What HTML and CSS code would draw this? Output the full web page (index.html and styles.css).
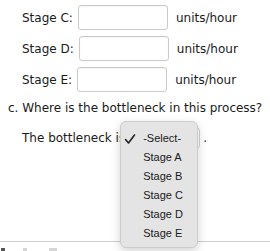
FILE: index.html
```html
<!DOCTYPE html>
<html lang="en-US">
	<head>
		<title>Bottleneck question</title>
		<link rel="stylesheet" href="styles.css">
	</head>
	<body>
		<div class="page">
			<div class="rate-list">
				<div class="rate-row">
					<label>Stage C:</label>
					<span class="rate-input"></span>
					<span>units/hour</span>
				</div>
				<div class="rate-row">
					<label>Stage D:</label>
					<span class="rate-input"></span>
					<span>units/hour</span>
				</div>
				<div class="rate-row">
					<label>Stage E:</label>
					<span class="rate-input"></span>
					<span>units/hour</span>
				</div>
			</div>
			<p class="question">c. Where is the bottleneck in this process?</p>
			<div class="answer">
				<span>The bottleneck is</span>
				<span class="select-wrap">
					<span class="select-box"></span>
					<div class="menu">
						<div class="menu-item checked">
							<svg class="check" width="12" height="12" viewBox="0 0 12 12">
								<polyline points="1.5,6.5 4.5,10 10.5,2" fill="none" stroke="#222" stroke-width="1.6" stroke-linecap="round" stroke-linejoin="round"/>
							</svg>
							-Select-
						</div>
						<div class="menu-item">Stage A</div>
						<div class="menu-item">Stage B</div>
						<div class="menu-item">Stage C</div>
						<div class="menu-item">Stage D</div>
						<div class="menu-item">Stage E</div>
					</div>
				</span>
				<span>.</span>
			</div>
			<div class="divider"></div>
			<div class="toolbar">
				<span class="tool dark"></span>
				<span class="tool"></span>
				<span class="tool wide"></span>
			</div>
		</div>
	</body>
</html>
```
FILE: styles.css
```css
* {
	box-sizing: border-box;
}
body {
	margin: 0;
	background: white;
	color: #1a1a1a;
	font-family: "DejaVu Sans", Verdana, sans-serif;
	font-size: 12px;
	overflow: hidden;
}

.page {
	width: 270px;
	height: 251px;
	padding-top: 5px;
}

.rate-list {
	display: flex;
	flex-direction: column;
	gap: 6px;
	padding-left: 22px;
}
.rate-row {
	display: flex;
	align-items: center;
	height: 25px;
}
.rate-row label {
	margin-right: 5px;
}
.rate-input {
	width: 90px;
	height: 25px;
	border: 1px solid #cacaca;
	border-radius: 3px;
	background: white;
	margin-right: 8px;
	box-shadow: inset 0 1px 1px rgba(0, 0, 0, 0.04);
}

.question {
	margin: 8px 0 0 8px;
	line-height: 16px;
}

.answer {
	display: flex;
	align-items: center;
	height: 24px;
	margin-top: 10px;
	padding-left: 22px;
}
.select-wrap {
	position: relative;
	margin: 0 3px 0 3px;
}
.select-box {
	display: block;
	width: 72px;
	height: 24px;
	border: 1px solid #d2d2d2;
	border-radius: 5px;
	background: white;
}
.menu {
	position: absolute;
	left: -8px;
	top: -5px;
	width: 78px;
	padding: 7px 0 4px;
	background: #e4e4e4;
	border: 1px solid #cdcdcd;
	border-radius: 6px;
	box-shadow: 0 3px 10px rgba(0, 0, 0, 0.18);
	font-family: "Liberation Sans", Arial, sans-serif;
	font-size: 11px;
	color: #1a1a1a;
	z-index: 2;
}
.menu-item {
	position: relative;
	height: 19px;
	line-height: 19px;
	padding-left: 22px;
}
.check {
	position: absolute;
	left: 3px;
	top: 4px;
}

.divider {
	height: 1px;
	background: #cfcfcf;
	margin-top: 91px;
}

.toolbar {
	display: flex;
	gap: 18px;
	padding: 6px 0 0 1px;
}
.tool {
	width: 4px;
	height: 3px;
	background: #d6d6d6;
}
.tool.dark {
	background: #555;
}
.tool.wide {
	width: 8px;
	margin-left: 4px;
}
```
